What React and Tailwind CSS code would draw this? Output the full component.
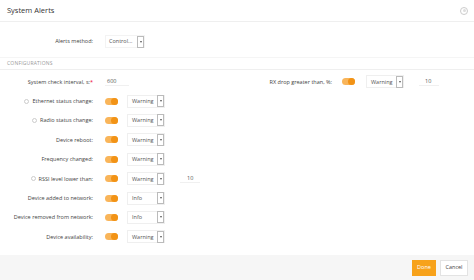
import React from "react";

const font = { fontFamily: '"Open Sans", "Liberation Sans", sans-serif' };

function Toggle() {
  return (
    <div className="relative h-[7px] w-[13px] rounded-full bg-[#f9b55a]">
      <div className="absolute right-0 top-0 h-[7px] w-[7px] rounded-full bg-[#f29316]" />
    </div>
  );
}

function Arrow() {
  return (
    <div className="flex h-[12px] w-[7px] items-center justify-center border border-[#bbb] bg-white">
      <div className="h-0 w-0 border-x-[1.5px] border-t-[2px] border-x-transparent border-t-[#555]" />
    </div>
  );
}

function Select({ value }) {
  return (
    <div className="flex h-[13px] w-[38px] items-center justify-between border border-[#efefef] bg-white pl-[4px]">
      <span className="text-[5.5px] text-[#555]">{value}</span>
      <Arrow />
    </div>
  );
}

function Info() {
  return <span className="mr-[3px] inline-block h-[5px] w-[5px] rounded-full border border-[#ccc]" />;
}

function Row({ label, info, children }) {
  return (
    <div className="flex h-[19.4px] items-center">
      <div className="flex w-[93px] items-center justify-end text-[5.5px] text-[#444]">
        {info && <Info />}
        {label}
      </div>
      <div className="ml-[12px] flex items-center">{children}</div>
    </div>
  );
}

function AlertCtl({ value = "Warning", extra }) {
  return (
    <>
      <Toggle />
      <div className="ml-[9px]">
        <Select value={value} />
      </div>
      {extra && (
        <div className="ml-[15px] w-[20px] border-b border-[#f0f0f0] pl-[7px] text-[5.5px] text-[#555]">{extra}</div>
      )}
    </>
  );
}

export default function App() {
  return (
    <div className="flex h-[280px] w-[474px] flex-col bg-white" style={font}>
      <div className="flex h-[22px] shrink-0 items-center justify-between border-b border-[#efefef] pl-[7px] pr-[6px]">
        <span className="text-[7.5px] text-[#333]">System Alerts</span>
        <div className="flex h-[8px] w-[8px] items-center justify-center rounded-full border border-[#ccc]">
          <div className="h-[3px] w-[3px] rounded-full bg-[#ddd]" />
        </div>
      </div>
      <div className="flex h-[36px] shrink-0 items-center border-b border-[#f5f5f5] pt-[4px]">
        <div className="w-[93px] text-right text-[5.5px] text-[#444]">Alerts method:</div>
        <div className="ml-[12px] flex h-[13px] w-[40px] items-center justify-between border border-[#f3f3f3] pl-[3px]">
          <span className="text-[5.5px] text-[#555]">Control...</span>
          <Arrow />
        </div>
      </div>
      <div className="flex h-[12px] shrink-0 items-center border-b border-[#efefef] pl-[7px] text-[5px] uppercase tracking-[0.2px] text-[#999]">
        Configurations
      </div>
      <div className="flex flex-1 pt-[2px]">
        <div className="w-[240px]">
          <Row label={<span>System check interval, s:<span className="text-[#e03]">*</span></span>}>
            <div className="w-[24px] border-b border-[#f0f0f0] pl-[2px] text-[5.5px] text-[#555]">600</div>
          </Row>
          <Row label="Ethernet status change:" info>
            <AlertCtl />
          </Row>
          <Row label="Radio status change:" info>
            <AlertCtl />
          </Row>
          <Row label="Device reboot:">
            <AlertCtl />
          </Row>
          <Row label="Frequency changed:">
            <AlertCtl />
          </Row>
          <Row label="RSSI level lower than:" info>
            <AlertCtl extra="10" />
          </Row>
          <Row label="Device added to network:">
            <AlertCtl value="Info" />
          </Row>
          <Row label="Device removed from network:">
            <AlertCtl value="Info" />
          </Row>
          <Row label="Device availability:">
            <AlertCtl />
          </Row>
        </div>
        <div className="flex-1">
          <div className="flex h-[19.4px] items-center">
            <div className="w-[92px] text-right text-[5.5px] text-[#444]">RX drop greater than, %:</div>
            <div className="ml-[10px] flex items-center">
              <Toggle />
              <div className="ml-[11px]">
                <Select value="Warning" />
              </div>
              <div className="ml-[15px] w-[20px] border-b border-[#f0f0f0] pl-[6px] text-[5.5px] text-[#555]">10</div>
            </div>
          </div>
        </div>
      </div>
      <div className="flex h-[25px] shrink-0 items-center justify-end gap-[4px] bg-[#f6f6f6] pr-[6px]">
        <div className="flex h-[16px] w-[24px] items-center justify-center bg-[#f7a21b] text-[5.5px] text-white">Done</div>
        <div className="flex h-[16px] w-[28px] items-center justify-center border border-[#e3e3e3] bg-white text-[5.5px] text-[#444]">
          Cancel
        </div>
      </div>
    </div>
  );
}
